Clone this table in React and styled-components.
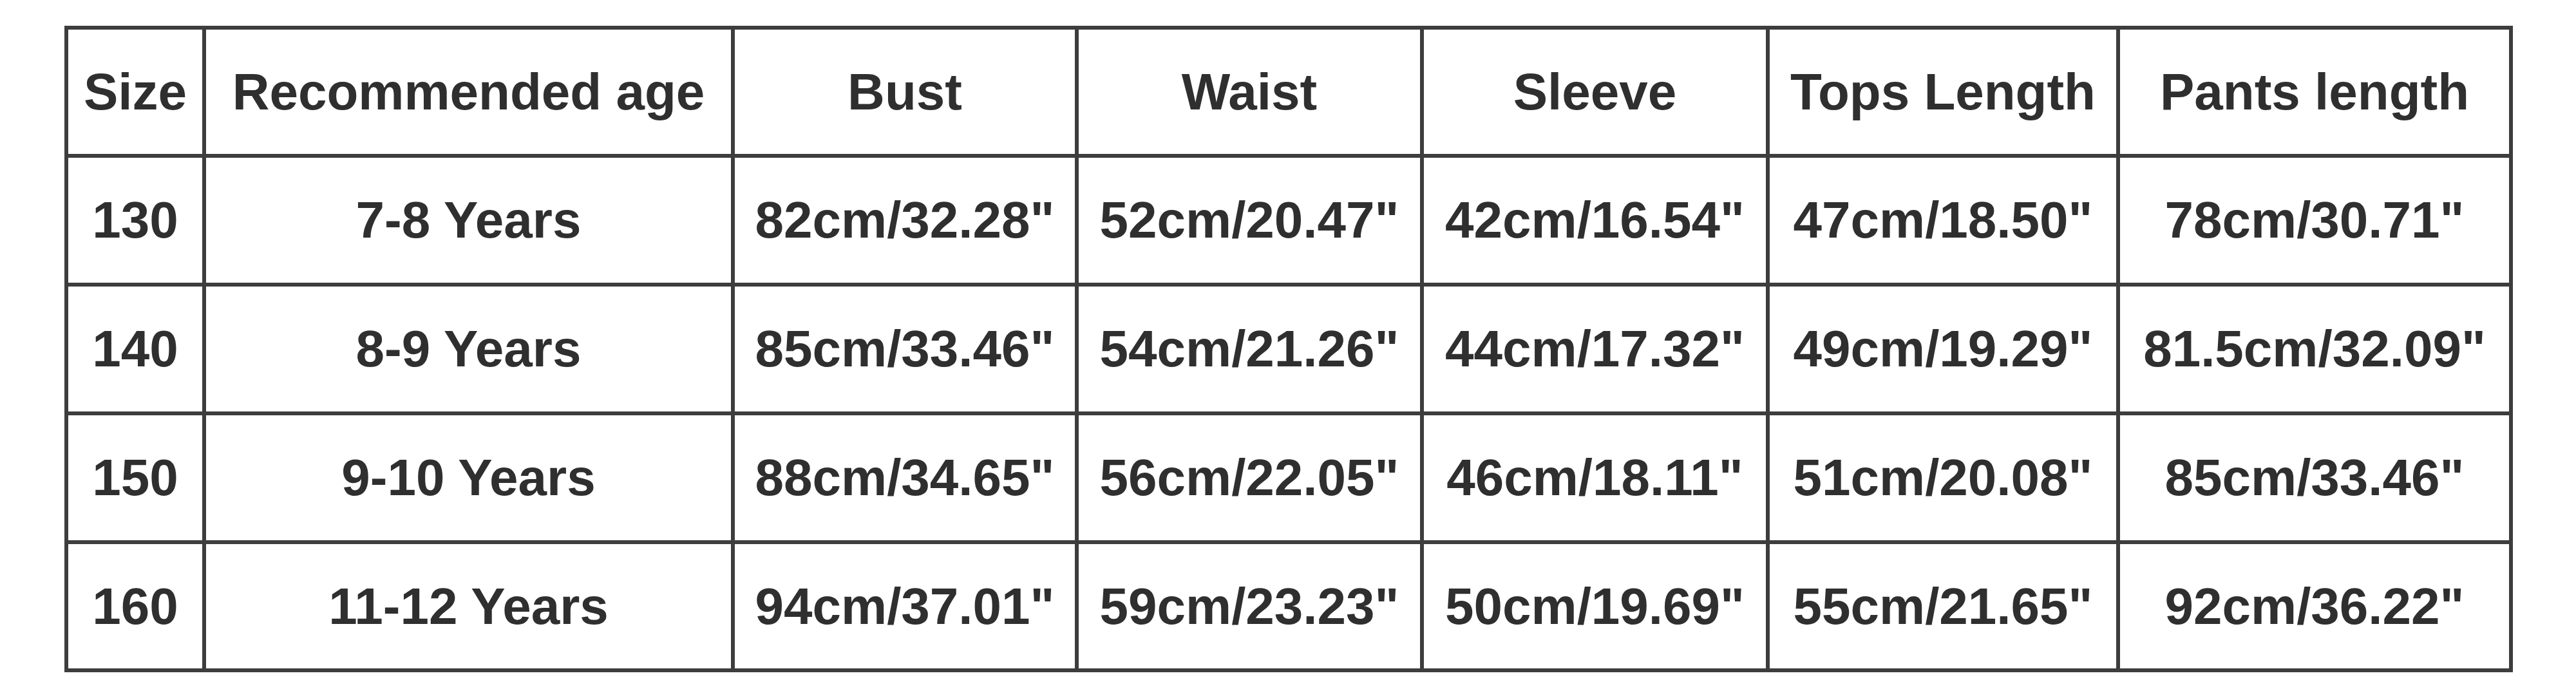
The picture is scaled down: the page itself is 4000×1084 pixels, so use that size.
import React from "react";
import styled, { createGlobalStyle } from "styled-components";

const GlobalStyle = createGlobalStyle`
  html, body {
    margin: 0;
    padding: 0;
    background: #ffffff;
  }
  body {
    font-family: "Liberation Sans", Arial, sans-serif;
  }
`;

const Page = styled.div`
  width: 4000px;
  height: 1084px;
  box-sizing: border-box;
  padding: 40px 0 0 100px;
  background: #ffffff;
`;

const Table = styled.div`
  display: inline-grid;
  grid-template-columns: 208px 815px 528px 530px 531px 538px 604px;
  grid-template-rows: 193px 194px 194px 194px 193px;
  gap: 6px;
  padding: 6px;
  background: #3d3d3d;
`;

const Cell = styled.div`
  display: flex;
  align-items: center;
  justify-content: center;
  background: #ffffff;
  color: #2f2f2f;
  font-family: "Liberation Sans", Arial, sans-serif;
  font-weight: 700;
  font-size: ${(p) => (p.$head ? "80px" : "80px")};
  white-space: nowrap;
`;

const headers = [
  "Size",
  "Recommended age",
  "Bust",
  "Waist",
  "Sleeve",
  "Tops Length",
  "Pants length",
];

const rows = [
  ["130", "7-8 Years", "82cm/32.28\"", "52cm/20.47\"", "42cm/16.54\"", "47cm/18.50\"", "78cm/30.71\""],
  ["140", "8-9 Years", "85cm/33.46\"", "54cm/21.26\"", "44cm/17.32\"", "49cm/19.29\"", "81.5cm/32.09\""],
  ["150", "9-10 Years", "88cm/34.65\"", "56cm/22.05\"", "46cm/18.11\"", "51cm/20.08\"", "85cm/33.46\""],
  ["160", "11-12 Years", "94cm/37.01\"", "59cm/23.23\"", "50cm/19.69\"", "55cm/21.65\"", "92cm/36.22\""],
];

export default function App() {
  return (
    <>
      <GlobalStyle />
      <Page>
        <Table>
          {headers.map((h) => (
            <Cell key={h} $head>
              {h}
            </Cell>
          ))}
          {rows.map((r) =>
            r.map((c, i) => <Cell key={r[0] + "-" + i}>{c}</Cell>)
          )}
        </Table>
      </Page>
    </>
  );
}
